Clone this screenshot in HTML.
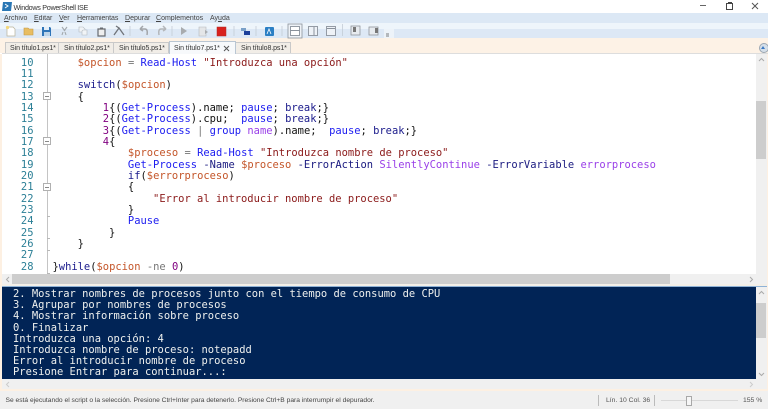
<!DOCTYPE html>
<html lang="es"><head><meta charset="utf-8"><title>Windows PowerShell ISE</title>
<style>
html,body{margin:0;padding:0;width:768px;height:409px;overflow:hidden;background:#fff}
body{position:relative;font-family:"Liberation Sans",sans-serif;color:#222}
.a{position:absolute}
.t{position:absolute;white-space:pre;line-height:12px;filter:blur(.3px)}
.tab{position:absolute;top:42px;height:11px;background:#f1ede7;border:1px solid #c9c9c9;border-bottom:0;border-left:0;font-size:7px;letter-spacing:-.08px;line-height:11px;padding-left:5px;color:#333;box-sizing:border-box;filter:blur(.2px)}
.l{position:absolute;left:52.500px;margin-top:.7px;white-space:pre;font:10.45px/12px "DejaVu Sans Mono",monospace;color:#111;filter:blur(.35px)}
.n{position:absolute;left:10px;margin-top:.7px;width:23.5px;text-align:right;font:10.45px/12px "DejaVu Sans Mono",monospace;color:#2b7f96;filter:blur(.35px)}
.c{position:absolute;left:13px;margin-top:1px;white-space:pre;font:10.45px/12px "DejaVu Sans Mono",monospace;color:#eef0ee;filter:blur(.35px)}
.box{position:absolute;left:43px;width:6px;height:6px;border:1px solid #b0b0b0;background:#fff}
.box:after{content:"";position:absolute;left:1px;top:2.5px;width:4px;height:1px;background:#888}
.tick{position:absolute;left:47px;width:3px;height:1px;background:#b8b8b8}
i{font-style:normal}
.v{color:#c4562a}.b{color:#1c1cf0}.s{color:#8b1a1a}.k{color:#1a1a8b}.o{color:#777}.p{color:#1a1a80}.m{color:#9a40e8}.u{color:#800080}
svg{position:absolute;filter:blur(.3px)}
</style></head><body>

<!-- title bar -->
<svg style="left:2px;top:1px" width="11" height="11" viewBox="0 0 11 11"><path d="M1 1h9l-1 9H0z" fill="#2a77b5"/><path d="M3 3l3 2-3 2" stroke="#fff" fill="none"/></svg>
<div class="t" style="left:13.500px;top:1.500px;font-size:7.2px;letter-spacing:-.3px;color:#333">Windows PowerShell ISE</div>
<div class="a" style="left:700px;top:5px;width:6px;height:1px;background:#666"></div>
<div class="a" style="left:726px;top:3px;width:5px;height:5px;border:1px solid #444;background:#fff"></div>
<div class="a" style="left:728px;top:2px;width:4px;height:1px;background:#444"></div>
<svg style="left:751px;top:2px" width="8" height="8" viewBox="0 0 8 8"><path d="M1 1l6 6M7 1l-6 6" stroke="#555" fill="none"/></svg>

<!-- menu + toolbar bands -->
<div class="a" style="left:0;top:13px;width:768px;height:10px;background:#dce8f5"></div>
<div class="a" style="left:0;top:23px;width:768px;height:6px;background:#eef5fb"></div>
<div class="a" style="left:0;top:29px;width:768px;height:9px;background:#dde8f5"></div>
<div class="a" style="left:0;top:38px;width:768px;height:15px;background:#fdf2e6"></div>
<div class="t" style="left:4px;top:12.5px;font-size:7px;color:#444"><u>A</u>rchivo</div>
<div class="t" style="left:34px;top:12.5px;font-size:7px;color:#444"><u>E</u>ditar</div>
<div class="t" style="left:59px;top:12.5px;font-size:7px;color:#444"><u>V</u>er</div>
<div class="t" style="left:77px;top:12.5px;font-size:7px;letter-spacing:-.06px;color:#444"><u>H</u>erramientas</div>
<div class="t" style="left:125px;top:12.5px;font-size:7px;color:#444"><u>D</u>epurar</div>
<div class="t" style="left:156px;top:12.5px;font-size:7px;color:#444"><u>C</u>omplementos</div>
<div class="t" style="left:210px;top:12.5px;font-size:7px;color:#444">Ay<u>u</u>da</div>

<!-- toolbar icons -->
<svg style="left:0;top:23px" width="400" height="16" viewBox="0 0 400 16">
<path d="M7 4h6l2 2v7H7z" fill="#fff" stroke="#b9b29a" stroke-width=".7"/><circle cx="7.500" cy="4.500" r="1.600" fill="#f4d77a"/>
<path d="M24 5h4l1 1h4v6H24z" fill="#e8bd62" stroke="#c49a45" stroke-width=".6"/>
<path d="M42 4h8l1 1v8H42z" fill="#2e74b8"/><path d="M44 4h5v3h-5z" fill="#e4eef7"/><path d="M44 9h6v4h-6z" fill="#bcd3e8"/>
<path d="M62 4l3 4m2-4l-3 4m-1 1l-1 3m3-3l1 3" stroke="#a3a9ad" stroke-width="1.100" fill="none"/>
<path d="M79 4h4l2 2v3h-6z" fill="#f1f4f7" stroke="#b3bac0" stroke-width=".6"/><path d="M83 7h4v5h-5V8z" fill="#f1f4f7" stroke="#b3bac0" stroke-width=".6"/>
<path d="M98 6h7v7h-7z" fill="#eee" stroke="#676b70" stroke-width="1.200"/><path d="M100 4.500h3v2h-3z" fill="#676b70"/>
<path d="M114 12l5-7 5 7M119 5l-3-2" stroke="#70747a" stroke-width="1.300" fill="none"/>
<path d="M130 3v10" stroke="#c4ccd6" stroke-width=".8"/>
<path d="M140 6h5q3 0 2 6M140 6l3-3M140 6l3 2" stroke="#a3a6aa" stroke-width="1.500" fill="none"/>
<path d="M166 6h-5q-3 0-2 6M166 6l-3-3M166 6l-3 2" stroke="#b4b7ba" stroke-width="1.500" fill="none"/>
<path d="M172 3v10" stroke="#c4ccd6" stroke-width=".8"/>
<path d="M181 4l6 4-6 4z" fill="#a8abae"/>
<path d="M199 4h7v9h-7z" fill="#e4e6e8" stroke="#b5b8bb" stroke-width=".6"/><path d="M205 7l3 2-3 2z" fill="#a8abae"/>
<rect x="217" y="4" width="9" height="9" fill="#d8211d" stroke="#b02a24" stroke-width=".5"/>
<path d="M234 3v10" stroke="#c4ccd6" stroke-width=".8"/>
<path d="M241 5h5v3h-5z" fill="#7aa0c8"/><path d="M244 8h6v4h-6z" fill="#1c3f9a"/>
<path d="M256 3v10" stroke="#c4ccd6" stroke-width=".8"/>
<rect x="265" y="4" width="9" height="9" rx="1" fill="#2b7fc4"/><path d="M267 11l2-5 2 5" stroke="#fff" fill="none" stroke-width=".8"/>
<path d="M282 3v10" stroke="#c4ccd6" stroke-width=".8"/>
<rect x="288" y="1" width="14" height="14" fill="#eef2f7" stroke="#8a929c" stroke-width=".8"/>
<rect x="290.500" y="3.500" width="9" height="9" fill="#fff" stroke="#8a929c" stroke-width=".9"/><path d="M290 7.500h10" stroke="#8a929c"/>
<rect x="308.500" y="3.500" width="9" height="9" fill="#eef2f7" stroke="#8a929c" stroke-width=".9"/><path d="M314 4v8" stroke="#8a929c"/>
<rect x="326.500" y="3.500" width="9" height="9" fill="#eef2f7" stroke="#8a929c" stroke-width=".9"/><path d="M327 5.500h8" stroke="#8a929c"/>
<path d="M342.500 1v12" stroke="#c4ccd6" stroke-width=".8"/>
<rect x="351" y="3" width="9" height="9" fill="#e7ebef" stroke="#8f959b" stroke-width=".8"/><rect x="353" y="4" width="3" height="5" fill="#777"/>
<rect x="369" y="4" width="9" height="8" fill="#e7ebef" stroke="#8f959b" stroke-width=".8"/><rect x="375" y="5" width="3" height="5" fill="#777"/>
</svg>
<div class="a" style="left:384px;top:29px;width:10px;height:9px;background:#edf3f9"></div>
<svg style="left:385px;top:32px" width="8" height="6" viewBox="0 0 8 6"><path d="M1 2h3M1 4h3" stroke="#555" stroke-width=".7"/></svg>

<!-- tabs -->
<div class="tab" style="left:5px;width:54px;border-left:1px solid #c9c9c9;padding-left:4px">Sin título1.ps1*</div>
<div class="tab" style="left:59px;width:55px">Sin título2.ps1*</div>
<div class="tab" style="left:114px;width:55px">Sin título5.ps1*</div>
<div class="tab" style="left:169px;top:41px;height:13px;width:67px;background:#f7f9fb;border-color:#b9c6d3;border-left:1px solid #b9c6d3;line-height:13px;padding-left:4px;z-index:2">Sin título7.ps1*</div>
<svg style="left:223px;top:45px;z-index:3" width="7" height="7" viewBox="0 0 7 7"><path d="M1 1l5 5M6 1l-5 5" stroke="#555" fill="none"/></svg>
<div class="tab" style="left:236px;width:55px">Sin título8.ps1*</div>
<div class="a" style="left:759px;top:43px;width:8px;height:8px;border-radius:50%;background:#d5dfe9;border:.5px solid #9ba6b2"></div>
<div class="a" style="left:761px;top:46px;width:0;height:0;border-left:2.500px solid transparent;border-right:2.500px solid transparent;border-bottom:3px solid #3a78c2"></div>

<!-- editor -->
<div class="a" style="left:2px;top:53px;width:766px;height:231px;background:#fff;border-top:1px solid #ddd;box-sizing:border-box"></div>
<div class="a" style="left:47px;top:54px;width:1px;height:220px;background:#c4c4c4"></div>

<div class="n" style="top:56px">10</div><div class="n" style="top:67.300px">11</div><div class="n" style="top:78.700px">12</div><div class="n" style="top:90px">13</div><div class="n" style="top:101.300px">14</div><div class="n" style="top:112.700px">15</div><div class="n" style="top:124px">16</div><div class="n" style="top:135.300px">17</div><div class="n" style="top:146.700px">18</div><div class="n" style="top:158px">19</div><div class="n" style="top:169.300px">20</div><div class="n" style="top:180.700px">21</div><div class="n" style="top:192px">22</div><div class="n" style="top:203.300px">23</div><div class="n" style="top:214.700px">24</div><div class="n" style="top:226px">25</div><div class="n" style="top:237.300px">26</div><div class="n" style="top:248.700px">27</div><div class="n" style="top:260px">28</div>

<div class="box" style="top:92px"></div><div class="box" style="top:137px"></div><div class="box" style="top:183px"></div>
<div class="tick" style="top:216px"></div><div class="tick" style="top:238px"></div><div class="tick" style="top:250px"></div><div class="tick" style="top:273px"></div>

<div class="l" style="top:56px">    <i class="v">$opcion</i> <i class="o">=</i> <i class="b">Read-Host</i> <i class="s">"Introduzca una opción"</i></div>
<div class="l" style="top:78.700px">    <i class="k">switch</i>(<i class="v">$opcion</i>)</div>
<div class="l" style="top:90px">    {</div>
<div class="l" style="top:101.300px">        <i class="u">1</i>{(<i class="b">Get-Process</i>).name; <i class="b">pause</i>; <i class="k">break</i>;}</div>
<div class="l" style="top:112.700px">        <i class="u">2</i>{(<i class="b">Get-Process</i>).cpu;  <i class="b">pause</i>; <i class="k">break</i>;}</div>
<div class="l" style="top:124px">        <i class="u">3</i>{(<i class="b">Get-Process</i> <i class="o">|</i> <i class="b">group</i> <i class="m">name</i>).name;  <i class="b">pause</i>; <i class="k">break</i>;}</div>
<div class="l" style="top:135.300px">        <i class="u">4</i>{</div>
<div class="l" style="top:146.700px">            <i class="v">$proceso</i> <i class="o">=</i> <i class="b">Read-Host</i> <i class="s">"Introduzca nombre de proceso"</i></div>
<div class="l" style="top:158px">            <i class="b">Get-Process</i> <i class="p">-Name</i> <i class="v">$proceso</i> <i class="p">-ErrorAction</i> <i class="m">SilentlyContinue</i> <i class="p">-ErrorVariable</i> <i class="m">errorproceso</i></div>
<div class="l" style="top:169.300px">            <i class="k">if</i>(<i class="v">$errorproceso</i>)</div>
<div class="l" style="top:180.700px">            {</div>
<div class="l" style="top:192px">                <i class="s">"Error al introducir nombre de proceso"</i></div>
<div class="l" style="top:203.300px">            }</div>
<div class="l" style="top:214.700px">            <i class="b">Pause</i></div>
<div class="l" style="top:226px">         }</div>
<div class="l" style="top:237.300px">    }</div>
<div class="l" style="top:260px">}<i class="k">while</i>(<i class="v">$opcion</i> <i class="o">-ne</i> <i class="u">0</i>)</div>

<!-- editor scrollbars -->
<div class="a" style="left:756px;top:54px;width:11px;height:220px;background:#f0f0f0"></div>
<div class="a" style="left:756px;top:101px;width:10px;height:58px;background:#cdcdcd"></div>
<svg style="left:758px;top:57px" width="7" height="5" viewBox="0 0 7 5"><path d="M1 4l2.500-2.500L6 4" stroke="#aaa" fill="none"/></svg>
<div class="a" style="left:2px;top:274px;width:754px;height:10px;background:#f0f0f0"></div>
<div class="a" style="left:12px;top:274px;width:658px;height:10px;background:#cdcdcd"></div>
<svg style="left:5px;top:276px" width="5" height="7" viewBox="0 0 5 7"><path d="M4 1L1.500 3.500 4 6" stroke="#aaa" fill="none"/></svg>
<svg style="left:749px;top:276px" width="5" height="7" viewBox="0 0 5 7"><path d="M1 1l2.500 2.500L1 6" stroke="#aaa" fill="none"/></svg>
<div class="a" style="left:756px;top:274px;width:11px;height:10px;background:#f0f0f0"></div>

<!-- splitter -->
<div class="a" style="left:0;top:284px;width:768px;height:2px;background:#f3efe8"></div>
<div class="a" style="left:2px;top:286px;width:766px;height:1px;background:#8fb2d6"></div>

<!-- console -->
<div class="a" style="left:2px;top:287px;width:754px;height:92px;background:#012456"></div>
<div class="a" style="left:756px;top:287px;width:11px;height:92px;background:#f0f0f0"></div>
<div class="a" style="left:756px;top:303px;width:10px;height:35px;background:#cdcdcd"></div>
<svg style="left:758px;top:290px" width="7" height="5" viewBox="0 0 7 5"><path d="M1 4l2.500-2.500L6 4" stroke="#aaa" fill="none"/></svg>
<svg style="left:758px;top:372px" width="7" height="5" viewBox="0 0 7 5"><path d="M1 1l2.500 2.500L6 1" stroke="#aaa" fill="none"/></svg>
<div class="c" style="top:287px">2. Mostrar nombres de procesos junto con el tiempo de consumo de CPU</div>
<div class="c" style="top:298.200px">3. Agrupar por nombres de procesos</div>
<div class="c" style="top:309.400px">4. Mostrar información sobre proceso</div>
<div class="c" style="top:320.600px">0. Finalizar</div>
<div class="c" style="top:331.800px">Introduzca una opción: 4</div>
<div class="c" style="top:343px">Introduzca nombre de proceso: notepadd</div>
<div class="c" style="top:354.200px">Error al introducir nombre de proceso</div>
<div class="c" style="top:365.400px">Presione Entrar para continuar...:</div>

<div class="a" style="left:2px;top:379px;width:765px;height:10px;background:#f0f0f0"></div>
<svg style="left:5px;top:381px" width="5" height="7" viewBox="0 0 5 7"><path d="M4 1L1.500 3.500 4 6" stroke="#ccc" fill="none"/></svg>
<svg style="left:749px;top:381px" width="5" height="7" viewBox="0 0 5 7"><path d="M1 1l2.500 2.500L1 6" stroke="#ccc" fill="none"/></svg>
<div class="a" style="left:0;top:389px;width:768px;height:2px;background:#fdf0e2"></div>
<div class="a" style="left:0;top:284px;width:2px;height:107px;background:#fdf0e2"></div>
<div class="a" style="left:0;top:54px;width:2px;height:230px;background:#fdf0e2"></div>
<div class="a" style="left:767px;top:54px;width:1px;height:337px;background:#fdf0e2"></div>

<!-- status bar -->
<div class="a" style="left:0;top:391px;width:768px;height:18px;background:#f0f0f0"></div>
<div class="t" style="left:5.500px;top:395px;font-size:6.68px;color:#444">Se está ejecutando el script o la selección. Presione Ctrl+Inter para detenerlo. Presione Ctrl+B para interrumpir el depurador.</div>
<div class="a" style="left:598px;top:395px;width:1px;height:11px;background:#bbb"></div>
<div class="t" style="left:606px;top:394.500px;font-size:6.8px;color:#555">Lín. 10 Col. 36</div>
<div class="a" style="left:654px;top:395px;width:1px;height:11px;background:#bbb"></div>
<div class="a" style="left:661px;top:400px;width:77px;height:1px;background:#d8d8d8"></div>
<div class="a" style="left:686px;top:396px;width:4px;height:8px;background:#f6f6f6;border:1px solid #a8a8a8"></div>
<div class="t" style="left:743px;top:395px;font-size:6.8px;color:#555">155 %</div>
</body></html>
